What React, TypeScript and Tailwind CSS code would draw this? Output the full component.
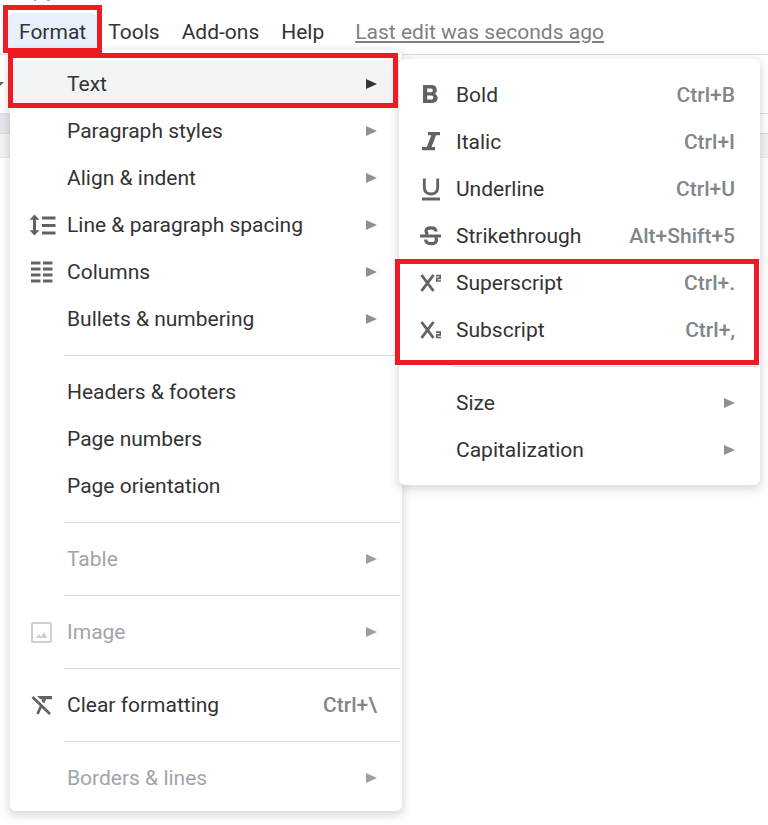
import React from "react";

type Item = {
  label: string;
  icon?: React.ReactNode;
  shortcut?: string;
  arrow?: boolean;
  active?: boolean;
  disabled?: boolean;
};

function Icon({ children }: { children: React.ReactNode }) {
  return (
    <svg viewBox="0 0 28 28" className="size-7" fill="currentColor" aria-hidden="true">
      {children}
    </svg>
  );
}

const icons = {
  bold: (
    <Icon>
      <path fillRule="evenodd" d="M5 4h8.500c3.400 0 5.300 2 5.300 4.900 0 1.700-.8 3-2 3.800 1.700.7 2.900 2.300 2.900 4.400 0 3-2.200 4.900-5.500 4.900H5V4zm4.200 3.400v3.800h3.600c1.300 0 2-.7 2-1.900s-.7-1.900-2-1.900H9.200zm0 7v4.200h3.900c1.400 0 2.200-.8 2.200-2.100s-.8-2.100-2.200-2.100H9.200z" />
    </Icon>
  ),
  italic: (
    <Icon>
      <path d="M10 4h12v3.200h-4L13.500 19H17v3.200H4V19h4.800l4.500-11.800H10V4z" />
    </Icon>
  ),
  underline: (
    <Icon>
      <path d="M6.300 3.500v8.500c0 4.500 2.200 7 6.700 7s6.700-2.500 6.700-7V3.500" fill="none" stroke="currentColor" strokeWidth="2.800" />
      <path d="M4 22.500h18v3H4z" />
    </Icon>
  ),
  strike: (
    <Icon>
      <path d="M18 9.500c-.1-2.300-1.800-3.700-4.900-3.700S8 7.200 8 9.300c0 1.200.6 2.200 2 3M7.600 17.500c.1 2.600 2 4.100 5.500 4.100s5.400-1.500 5.400-3.900c0-1-.4-1.800-1.100-2.500" fill="none" stroke="currentColor" strokeWidth="3.200" />
      <path d="M2 12.500h21v3H2z" />
    </Icon>
  ),
  superscript: (
    <Icon>
      <path d="M3.500 6l12 16M15.500 6l-12 16" fill="none" stroke="currentColor" strokeWidth="2.900" />
      <path d="M18 6.700h4.200v2.600h-3.400V12H23" fill="none" stroke="currentColor" strokeWidth="1.700" />
    </Icon>
  ),
  subscript: (
    <Icon>
      <path d="M3.500 6l12 16M15.500 6l-12 16" fill="none" stroke="currentColor" strokeWidth="2.900" />
      <path d="M18 16.200h4.200v2.600h-3.400v2.700H23" fill="none" stroke="currentColor" strokeWidth="1.700" />
    </Icon>
  ),
  spacing: (
    <Icon>
      <path d="M5.500 3.500l5 5.200H7v10.600h3.500l-5 5.200-5-5.200H4V8.700H.5zM13 5.500h13.500v3H13zM13 13h13.500v3H13zM13 20.500h13.500v3H13z" />
    </Icon>
  ),
  columns: (
    <Icon>
      <path d="M2 3.500h9.500v3H2zM14 3.500h9.500v3H14zM2 9.500h9.500v3H2zM14 9.500h9.500v3H14zM2 15.500h9.500v3H2zM14 15.500h9.500v3H14zM2 21.500h9.500v3H2zM14 21.500h9.500v3H14z" />
    </Icon>
  ),
  image: (
    <Icon>
      <rect x="3" y="5" width="19" height="19" rx="1" fill="none" stroke="currentColor" strokeWidth="2" />
      <path d="M7 20l3-4 2 2.500 3-4.500 3.500 6z" />
    </Icon>
  ),
  clear: (
    <Icon>
      <path d="M8 5h15v3.200h-6l-1.800 4.300-2.700-2.600.8-1.700h-2z" />
      <path d="M3.500 6l17.500 17M12.800 13.500L8.500 23" fill="none" stroke="currentColor" strokeWidth="2.700" />
    </Icon>
  ),
};

function MenuItem({ label, icon, shortcut, arrow, active, disabled }: Item) {
  return (
    <button
      type="button"
      role="menuitem"
      disabled={disabled}
      className={
        "flex h-[47px] w-full items-center pr-[25px] text-left " +
        (active ? "bg-[#f1f3f4] text-[#333]" : disabled ? "text-[#a0a5aa]" : "text-[#333]")
      }
    >
      <span className={"flex w-[38px] shrink-0 " + (disabled ? "text-[#d0d0d0]" : "text-[#5f6368]")}>{icon}</span>
      <span className="grow">{label}</span>
      {shortcut && <span className="font-medium text-[#80868b]">{shortcut}</span>}
      {arrow && (
        <svg viewBox="0 0 11 10" className={"h-[10px] w-[11px] " + (active ? "text-[#333]" : disabled ? "text-[#9aa0a6]" : "text-[#909090]")} fill="currentColor" aria-hidden="true">
          <path d="M0 0l11 5-11 5z" />
        </svg>
      )}
    </button>
  );
}

function Divider() {
  return <hr className="mt-[13px] mr-0.5 mb-3 ml-[54px] border-t border-[#dadce0]" />;
}

function Highlight({ className }: { className: string }) {
  return <div className={"pointer-events-none absolute z-20 border-[#ed1c24] " + className} />;
}

function TextMenu() {
  return (
    <div role="menu" aria-label="Text" className="absolute top-[59px] left-[399px] z-10 w-[361px] rounded-md bg-white py-3 shadow-[0_3px_9px_2px_rgba(60,64,67,0.18)]">
      <div className="pl-[19px]">
        <MenuItem label="Bold" icon={icons.bold} shortcut="Ctrl+B" />
        <MenuItem label="Italic" icon={icons.italic} shortcut="Ctrl+I" />
        <MenuItem label="Underline" icon={icons.underline} shortcut="Ctrl+U" />
        <MenuItem label="Strikethrough" icon={icons.strike} shortcut="Alt+Shift+5" />
      </div>
      <div className="relative pl-[19px]">
        <MenuItem label="Superscript" icon={icons.superscript} shortcut="Ctrl+." />
        <MenuItem label="Subscript" icon={icons.subscript} shortcut="Ctrl+," />
        <Highlight className="top-0 right-px -bottom-3 -left-1 border-[5px]" />
      </div>
      <Divider />
      <div className="pl-[19px]">
        <MenuItem label="Size" arrow />
        <MenuItem label="Capitalization" arrow />
      </div>
    </div>
  );
}

function FormatMenu() {
  return (
    <div role="menu" aria-label="Format" className="absolute top-[50px] left-[10px] w-[392px] rounded-md bg-white py-[10px] shadow-[0_3px_9px_2px_rgba(60,64,67,0.18)]">
      <div className="relative">
        <div className="bg-[#f1f3f4] pl-[19px]">
          <MenuItem label="Text" arrow active />
        </div>
        <Highlight className="-top-[7px] right-1 -bottom-px -left-0.5 border-[5px]" />
      </div>
      <div className="pl-[19px]">
        <MenuItem label="Paragraph styles" arrow />
        <MenuItem label="Align & indent" arrow />
        <MenuItem label="Line & paragraph spacing" icon={icons.spacing} arrow />
        <MenuItem label="Columns" icon={icons.columns} arrow />
        <MenuItem label="Bullets & numbering" arrow />
      </div>
      <Divider />
      <div className="pl-[19px]">
        <MenuItem label="Headers & footers" />
        <MenuItem label="Page numbers" />
        <MenuItem label="Page orientation" />
      </div>
      <Divider />
      <div className="pl-[19px]">
        <MenuItem label="Table" arrow disabled />
      </div>
      <Divider />
      <div className="pl-[19px]">
        <MenuItem label="Image" icon={icons.image} arrow disabled />
      </div>
      <Divider />
      <div className="pl-[19px]">
        <MenuItem label="Clear formatting" icon={icons.clear} shortcut="Ctrl+\" />
      </div>
      <Divider />
      <div className="pl-[19px]">
        <MenuItem label="Borders & lines" arrow disabled />
      </div>
    </div>
  );
}

export default function App() {
  return (
    <div className="relative min-h-screen overflow-hidden bg-white font-['Roboto',sans-serif] text-[21px] leading-7 text-[#333]">
      {/* bottom edge of the title row above the menu bar */}
      <svg viewBox="0 0 60 1" className="absolute top-0 left-0 h-px w-[60px]" fill="#a0a0a0" aria-hidden="true">
        <path d="M34 0h2v1h-2zM47 0h3v1h-3z" />
      </svg>
      <nav className="flex h-[55px] items-center border-b border-[#dadce0] pt-[9px] pl-2">
        <div className="relative">
          <button type="button" className="h-[38px] rounded-t-md bg-[#e8f0fe] px-[11px]">Format</button>
          <Highlight className="-inset-x-[5px] -top-2 -bottom-0.5 border-[5px]" />
        </div>
        <button type="button" className="h-[38px] px-[11px]">Tools</button>
        <button type="button" className="h-[38px] px-[11px]">Add-ons</button>
        <button type="button" className="h-[38px] px-[11px]">Help</button>
        <a href="#history" className="ml-5 text-[#808080] underline">Last edit was seconds ago</a>
      </nav>
      <div className="flex h-[58px] items-center">
        <svg viewBox="0 0 4 4" className="size-1" fill="#5f6368" aria-hidden="true">
          <path d="M0 0h4L0 4z" />
        </svg>
      </div>
      <div className="flex h-[21px] border-y border-[#dadce0]">
        <div className="w-10 bg-[#e4e6ea]" />
      </div>
      <div className="h-6 border-b border-[#e8eaed] bg-[#f1f3f4]" />
      <FormatMenu />
      <TextMenu />
    </div>
  );
}
